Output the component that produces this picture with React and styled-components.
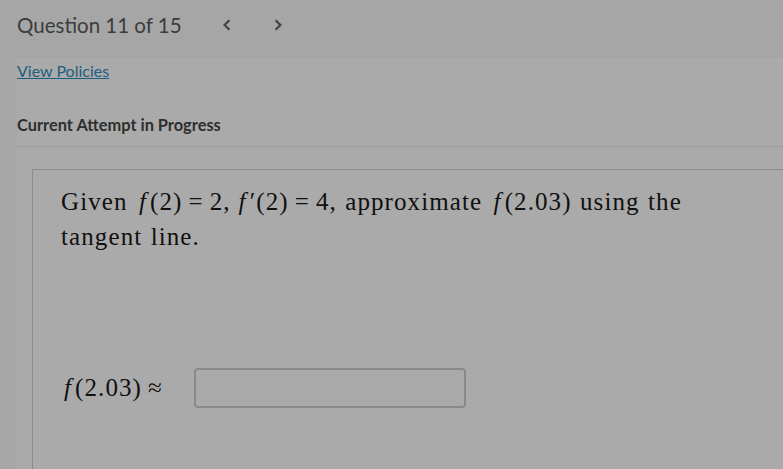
import styled, { createGlobalStyle } from "styled-components";

const GlobalStyle = createGlobalStyle`
  html, body {
    margin: 0;
    padding: 0;
    background: #a7a7a7;
    font-family: Lato, "Liberation Sans", sans-serif;
    overflow: hidden;
  }
`;

export default function App() {
  return (
    <>
      <GlobalStyle />
      <Header>
        <Title>Question 11 of 15</Title>
        <NavButton aria-label="previous">
          <Chevron d="M6 1 L2 5 L6 9" />
        </NavButton>
        <NavButton aria-label="next">
          <Chevron d="M2 1 L6 5 L2 9" />
        </NavButton>
      </Header>
      <Main>
        <PolicyLink href="#">View Policies</PolicyLink>
        <Attempt>Current Attempt in Progress</Attempt>
        <QuestionBox>
          <Prompt>
            <Line>
              Given <M>f</M>(2)<Rel>=</Rel>2,<Gap /><M>f</M>′(2)<Rel>=</Rel>4,
              approximate <M>f</M>(2.03) using the
            </Line>
            <Line>tangent line.</Line>
          </Prompt>
          <AnswerRow>
            <Label>
              <M>f</M>(2.03)<Rel>≈</Rel>
            </Label>
            <AnswerInput type="text" />
          </AnswerRow>
        </QuestionBox>
      </Main>
    </>
  );
}

function Chevron({ d }) {
  return (
    <svg width="10" height="12" viewBox="0 0 8 10">
      <path d={d} fill="none" stroke="#444" strokeWidth="1.9" />
    </svg>
  );
}

const Header = styled.div`
  height: 58px;
  display: flex;
  align-items: center;
  padding: 0 0 9px 17px;
  box-sizing: border-box;
  background: #a6a6a6;
`;

const Title = styled.h1`
  margin: 0 20px 0 0;
  font-size: 20.5px;
  font-weight: 400;
  color: #3c3c3c;
`;

const NavButton = styled.button`
  width: 51px;
  height: 30px;
  border: none;
  background: transparent;
  display: flex;
  align-items: center;
  justify-content: center;
  padding: 0;
`;

const Main = styled.div`
  margin-left: 17px;
  background: #aaaaaa;
  height: calc(100vh - 58px);
  display: flex;
  flex-direction: column;
  align-items: flex-start;
`;

const PolicyLink = styled.a`
  margin-top: 3px;
  font-size: 16px;
  color: #1f5e80;
  text-decoration: underline;
`;

const Attempt = styled.h2`
  align-self: stretch;
  margin: 35px 0 0;
  padding-bottom: 12px;
  font-size: 16.4px;
  font-weight: 700;
  color: #2e2e2e;
  border-bottom: 1px solid #9c9c9c;
`;

const QuestionBox = styled.div`
  margin: 22px 0 0 15px;
  align-self: stretch;
  flex: 1;
  border: 1px solid #8c8c8c;
  border-right: none;
  border-bottom: none;
  padding: 14px 28px 0;
  font-family: "Liberation Serif", serif;
  color: #101010;
`;

const Prompt = styled.p`
  margin: 0;
  font-size: 25px;
  line-height: 35px;
  letter-spacing: 1.1px;
  word-spacing: 1px;
`;

const Line = styled.span`
  display: block;
  white-space: nowrap;
`;

const M = styled.i`
  display: inline-block;
  font-style: italic;
  line-height: 1;
  padding: 0 3px 0 3px;
`;

const Rel = styled.span`
  display: inline-block;
  line-height: 1;
  margin: 0 6px;
`;

const Gap = styled.span`
  display: inline-block;
  width: 5px;
`;

const AnswerRow = styled.div`
  display: flex;
  align-items: center;
  margin-top: 114px;
`;

const Label = styled.span`
  font-size: 25px;
  letter-spacing: 1.1px;
  width: 133px;
`;

const AnswerInput = styled.input`
  width: 272px;
  height: 40px;
  box-sizing: border-box;
  border: 2px solid #8a8a8a;
  border-radius: 4px;
  background: transparent;
`;
